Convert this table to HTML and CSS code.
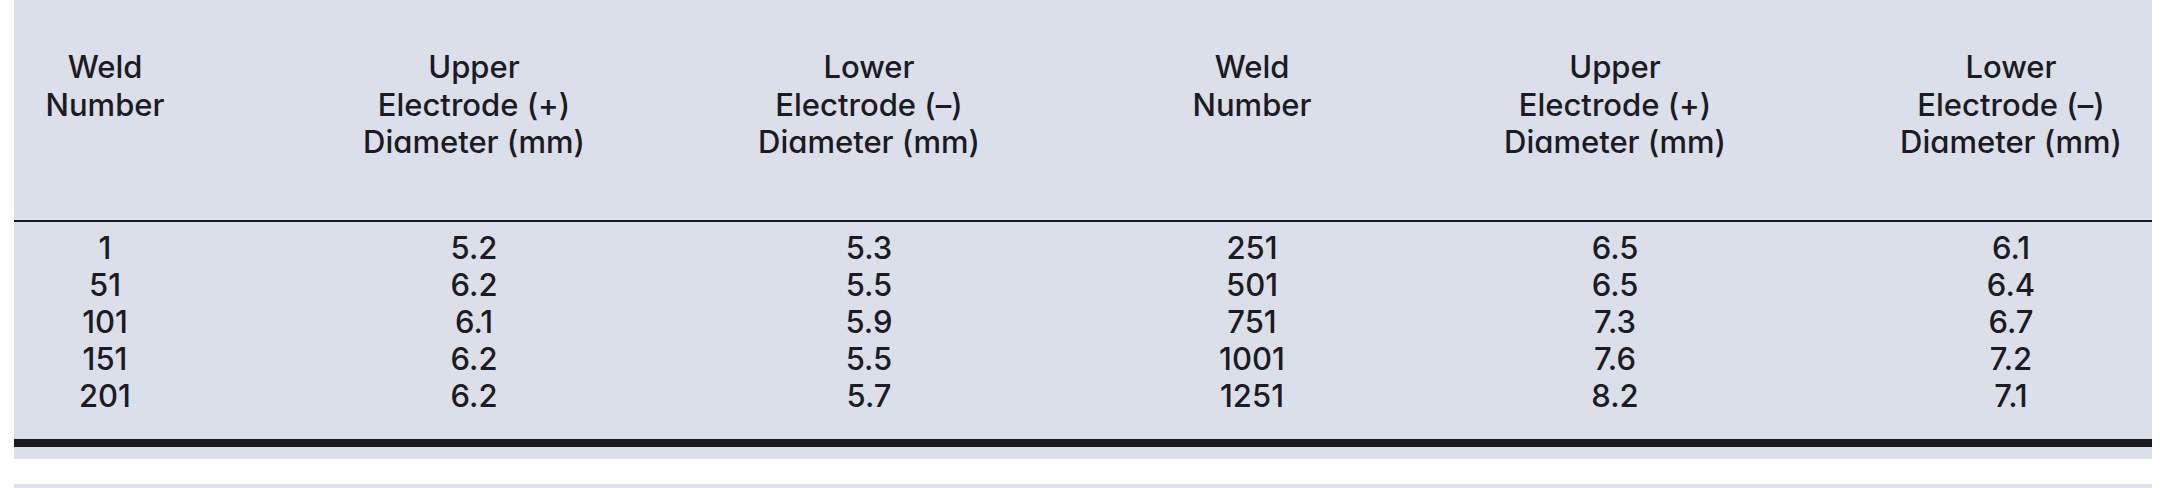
FILE: index.html
```html
<!DOCTYPE html>
<html lang="en">
<head>
<meta charset="utf-8">
<title>Electrode diameter by weld number</title>
<link rel="stylesheet" href="styles.css">
</head>
<body>
<div class="sheet">
  <div class="head cols">
    <div class="cell c1">Weld<br>Number</div>
    <div class="cell c2">Upper<br>Electrode (+)<br>Diameter (mm)</div>
    <div class="cell c3">Lower<br>Electrode (–)<br>Diameter (mm)</div>
    <div class="cell c4">Weld<br>Number</div>
    <div class="cell c5">Upper<br>Electrode (+)<br>Diameter (mm)</div>
    <div class="cell c6">Lower<br>Electrode (–)<br>Diameter (mm)</div>
  </div>
  <div class="body">
    <div class="row cols"><div class="cell c1">1</div><div class="cell c2">5.2</div><div class="cell c3">5.3</div><div class="cell c4">251</div><div class="cell c5">6.5</div><div class="cell c6">6.1</div></div>
    <div class="row cols"><div class="cell c1">51</div><div class="cell c2">6.2</div><div class="cell c3">5.5</div><div class="cell c4">501</div><div class="cell c5">6.5</div><div class="cell c6">6.4</div></div>
    <div class="row cols"><div class="cell c1">101</div><div class="cell c2">6.1</div><div class="cell c3">5.9</div><div class="cell c4">751</div><div class="cell c5">7.3</div><div class="cell c6">6.7</div></div>
    <div class="row cols"><div class="cell c1">151</div><div class="cell c2">6.2</div><div class="cell c3">5.5</div><div class="cell c4">1001</div><div class="cell c5">7.6</div><div class="cell c6">7.2</div></div>
    <div class="row cols"><div class="cell c1">201</div><div class="cell c2">6.2</div><div class="cell c3">5.7</div><div class="cell c4">1251</div><div class="cell c5">8.2</div><div class="cell c6">7.1</div></div>
  </div>
</div>
<div class="next"></div>
</body>
</html>
```

FILE: styles.css
```css
html, body {
  margin: 0;
  padding: 0;
  background: #ffffff;
}

body {
  font-family: Inter, "Liberation Sans", sans-serif;
  font-feature-settings: "cv11" 1;
  font-variant-numeric: proportional-nums;
  font-size: 31px;
  font-weight: 500;
  color: #1b1b21;
}

.sheet {
  margin-left: 14px;
  width: 2138px;
  background: #dbdfea;
  padding-bottom: 12px;
}

.cols {
  display: grid;
  grid-template-columns: 276px 382px 388px 374px 381px 337px;
}

.cell {
  text-align: center;
  white-space: nowrap;
  letter-spacing: 0;
}

.c1 { padding-right: 94px; }
.c2 { padding-right: 14px; }
.c3 { padding-left: 6px; }
.c4 { padding-left: 10px; }
.c5 { padding-right: 19px; }
.c6 { padding-left: 55px; }

.head {
  box-sizing: border-box;
  height: 222px;
  padding-top: 48px;
  line-height: 37.5px;
  border-bottom: 2px solid #1a1a1f;
}

.body {
  padding-top: 7px;
  padding-bottom: 25px;
  border-bottom: 8px solid #1a1a1f;
}

.row {
  line-height: 37px;
}

.next {
  margin: 25px 0 0 14px;
  width: 2138px;
  height: 10px;
  background: #dfe2ec;
}
```
